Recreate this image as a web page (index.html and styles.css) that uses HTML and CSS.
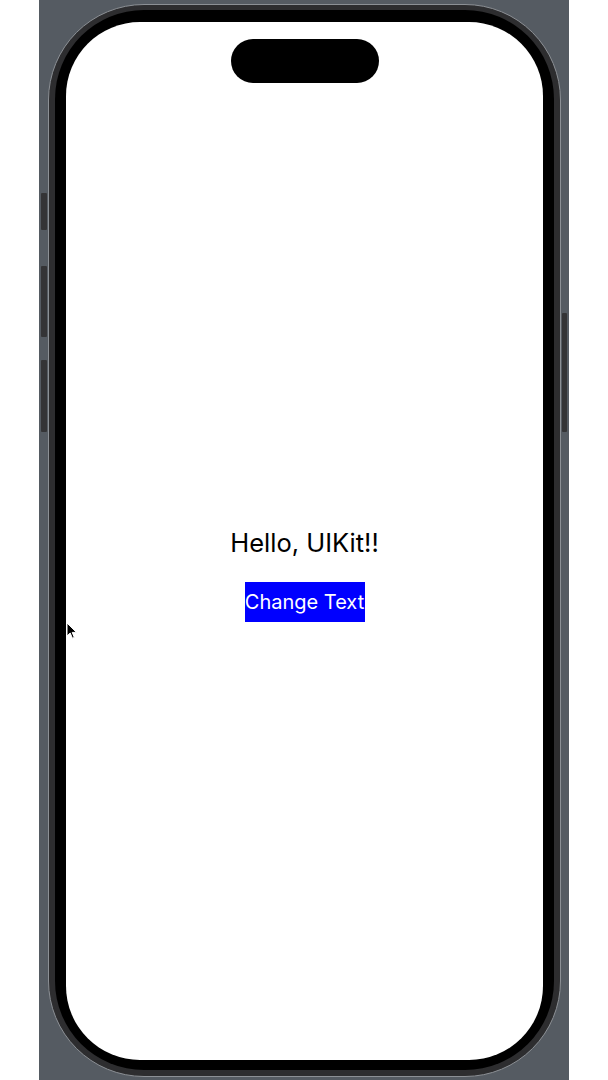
FILE: index.html
```html
<!DOCTYPE html>
<html>
<head>
<meta charset="utf-8">
<link rel="stylesheet" href="styles.css">
</head>
<body>
<div class="stage">
  <div class="btn-side btn-action"></div>
  <div class="btn-side btn-vol-up"></div>
  <div class="btn-side btn-vol-down"></div>
  <div class="btn-side btn-power"></div>
  <div class="phone">
    <div class="bezel">
      <div class="screen">
        <div class="island"></div>
        <div class="label">Hello, UIKit!!</div>
        <div class="button">Change Text</div>
      </div>
    </div>
  </div>
  <svg class="cursor" width="12" height="18" viewBox="0 0 12 18">
    <path d="M1 1 L1 14 L4.2 11 L6.4 16.2 L8.3 15.4 L6.2 10.4 L10.5 10.4 Z" fill="#000" stroke="#fff" stroke-width="1"/>
  </svg>
</div>
</body>
</html>
```
FILE: styles.css
```css
html, body {
  margin: 0;
  padding: 0;
  background: #ffffff;
}
.stage {
  position: relative;
  width: 530px;
  height: 1080px;
  margin-left: 39px;
  background: #555b62;
  overflow: hidden;
}
.phone {
  position: relative;
  margin-left: 9px;
  margin-top: 4px;
  width: 513px;
  height: 1073px;
  box-sizing: border-box;
  border-radius: 96px;
  background: #2d2d2f;
  border: 1px solid #8c9095;
  padding: 5px 6px 6px 6px;
}
.bezel {
  width: 100%;
  height: 100%;
  box-sizing: border-box;
  background: #000;
  border-radius: 89px;
  padding: 12px 11px 10px 11px;
}
.screen {
  width: 100%;
  height: 100%;
  background: #fff;
  border-radius: 74px;
  display: flex;
  flex-direction: column;
  align-items: center;
}
.island {
  width: 148px;
  height: 44px;
  margin-top: 17px;
  border-radius: 22px;
  background: #000;
  flex: none;
}
.label {
  margin-top: 444px;
  font-family: Inter, "Liberation Sans", sans-serif;
  font-size: 25.5px;
  line-height: 31px;
  color: #000;
}
.button {
  margin-top: 24px;
  width: 120px;
  height: 40px;
  background: #0000ff;
  color: #fff;
  font-family: Inter, "Liberation Sans", sans-serif;
  font-size: 20px;
  line-height: 40px;
  text-align: center;
}
.btn-side {
  position: absolute;
  background: #343436;
  border-radius: 1px;
}
.btn-action { left: 2px; top: 193px; width: 6px; height: 37px; }
.btn-vol-up { left: 2px; top: 266px; width: 6px; height: 71px; }
.btn-vol-down { left: 2px; top: 360px; width: 6px; height: 72px; }
.btn-power { left: 523px; top: 313px; width: 5px; height: 119px; }
.cursor {
  position: absolute;
  left: 27px;
  top: 622px;
}
```
